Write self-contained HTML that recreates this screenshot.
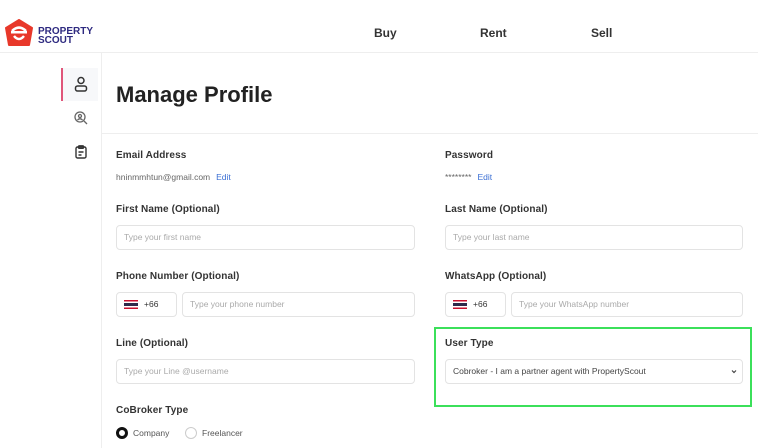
<!DOCTYPE html>
<html><head><meta charset="utf-8"><style>
*{margin:0;padding:0;box-sizing:border-box}
body{width:758px;height:448px;overflow:hidden;background:#fff;font-family:"Liberation Sans",sans-serif;color:#222;position:relative}
.a{position:absolute}
.lbl{font-size:10px;font-weight:bold;color:#333;letter-spacing:0.1px}
.val{font-size:8.5px;color:#666}
.edit{color:#3b6fd4;margin-left:6px}
.in{border:1px solid #e3e3e3;border-radius:4px;height:25px;font-size:8.5px;color:#aaa;padding-left:7px;line-height:23px}
.flag{width:14px;height:9px;background:linear-gradient(#c8102e 0 17%,#fff 17% 33%,#2d2a4a 33% 67%,#fff 67% 83%,#c8102e 83%);display:inline-block;vertical-align:middle;margin-right:6px}
.nav{font-size:12px;font-weight:bold;color:#333;top:26px}
</style></head><body>
<!-- header -->
<svg class="a" style="left:5px;top:19px" width="28" height="28" viewBox="0 0 28 28"><path d="M14 1 L27 9 L24 26 L4 26 L1 9 Z" fill="#e8382a" stroke="#e8382a" stroke-linejoin="round" stroke-width="2"/><path d="M7 12 Q14 5 21 12" stroke="#fff" stroke-width="2.5" fill="none"/><rect x="6" y="12" width="16" height="2.5" fill="#fff"/><path d="M9 17 Q14 23 19 17" stroke="#fff" stroke-width="2.5" fill="none"/></svg>
<div class="a" style="left:38px;top:27px;font-size:10px;font-weight:bold;color:#2e2a80;line-height:9px">PROPERTY<br>SCOUT</div>
<div class="a nav" style="left:374px">Buy</div>
<div class="a nav" style="left:480px">Rent</div>
<div class="a nav" style="left:591px">Sell</div>
<div class="a" style="left:0;top:52px;width:758px;height:1px;background:#eee"></div>
<!-- sidebar -->
<div class="a" style="left:101px;top:53px;width:1px;height:395px;background:#eee"></div>
<div class="a" style="left:62px;top:68px;width:36px;height:33px;background:#f7f8fa"></div>
<div class="a" style="left:61px;top:68px;width:2px;height:33px;background:#e0567a"></div>
<svg class="a" style="left:74px;top:76px" width="14" height="16" viewBox="0 0 14 16" fill="none" stroke="#333" stroke-width="1.5"><circle cx="7" cy="4.5" r="3"/><rect x="1.5" y="10" width="11" height="5" rx="2"/></svg>
<svg class="a" style="left:74px;top:111px" width="14" height="14" viewBox="0 0 14 14" fill="none" stroke="#666" stroke-width="1.3"><circle cx="6" cy="6" r="5"/><circle cx="6" cy="5" r="1.5"/><path d="M3.5 9 Q6 6.5 8.5 9"/><path d="M10 10 L13 13"/></svg>
<svg class="a" style="left:75px;top:145px" width="12" height="14" viewBox="0 0 12 14" fill="none" stroke="#333" stroke-width="1.4"><rect x="1" y="2" width="10" height="11" rx="1.5"/><rect x="3.5" y="0.8" width="5" height="2.5" rx="0.8"/><path d="M3.5 7h5M3.5 10h3"/></svg>
<!-- title -->
<div class="a" style="left:116px;top:82px;font-size:22px;font-weight:bold;color:#222">Manage Profile</div>
<div class="a" style="left:102px;top:133px;width:656px;height:1px;background:#eee"></div>
<!-- left column -->
<div class="a lbl" style="left:116px;top:150px">Email Address</div>
<div class="a val" style="left:116px;top:172px">hninmmhtun@gmail.com<span class="edit">Edit</span></div>
<div class="a lbl" style="left:116px;top:204px">First Name (Optional)</div>
<div class="a in" style="left:116px;top:225px;width:299px">Type your first name</div>
<div class="a lbl" style="left:116px;top:271px">Phone Number (Optional)</div>
<div class="a in" style="left:116px;top:292px;width:61px;color:#333"><span class="flag"></span>+66</div>
<div class="a in" style="left:182px;top:292px;width:233px">Type your phone number</div>
<div class="a lbl" style="left:116px;top:338px">Line (Optional)</div>
<div class="a in" style="left:116px;top:359px;width:299px">Type your Line @username</div>
<div class="a lbl" style="left:116px;top:405px">CoBroker Type</div>
<div class="a" style="left:116px;top:427px;width:12px;height:12px;border-radius:50%;border:3.5px solid #111"></div>
<div class="a val" style="left:133px;top:428px;color:#555">Company</div>
<div class="a" style="left:185px;top:427px;width:12px;height:12px;border-radius:50%;border:1px solid #ccc"></div>
<div class="a val" style="left:202px;top:428px;color:#555">Freelancer</div>
<!-- right column -->
<div class="a lbl" style="left:445px;top:150px">Password</div>
<div class="a val" style="left:445px;top:172px">********<span class="edit">Edit</span></div>
<div class="a lbl" style="left:445px;top:204px">Last Name (Optional)</div>
<div class="a in" style="left:445px;top:225px;width:298px">Type your last name</div>
<div class="a lbl" style="left:445px;top:271px">WhatsApp (Optional)</div>
<div class="a in" style="left:445px;top:292px;width:61px;color:#333"><span class="flag"></span>+66</div>
<div class="a in" style="left:511px;top:292px;width:232px">Type your WhatsApp number</div>
<div class="a" style="left:434px;top:327px;width:318px;height:80px;border:2px solid #3be05a"></div>
<div class="a lbl" style="left:445px;top:338px">User Type</div>
<div class="a in" style="left:445px;top:359px;width:298px;color:#444">Cobroker - I am a partner agent with PropertyScout</div>
<svg class="a" style="left:731px;top:369px" width="6" height="5" viewBox="0 0 6 5"><path d="M1 1.5 L3 3.5 L5 1.5" stroke="#444" stroke-width="1.2" fill="none"/></svg>
</body></html>
